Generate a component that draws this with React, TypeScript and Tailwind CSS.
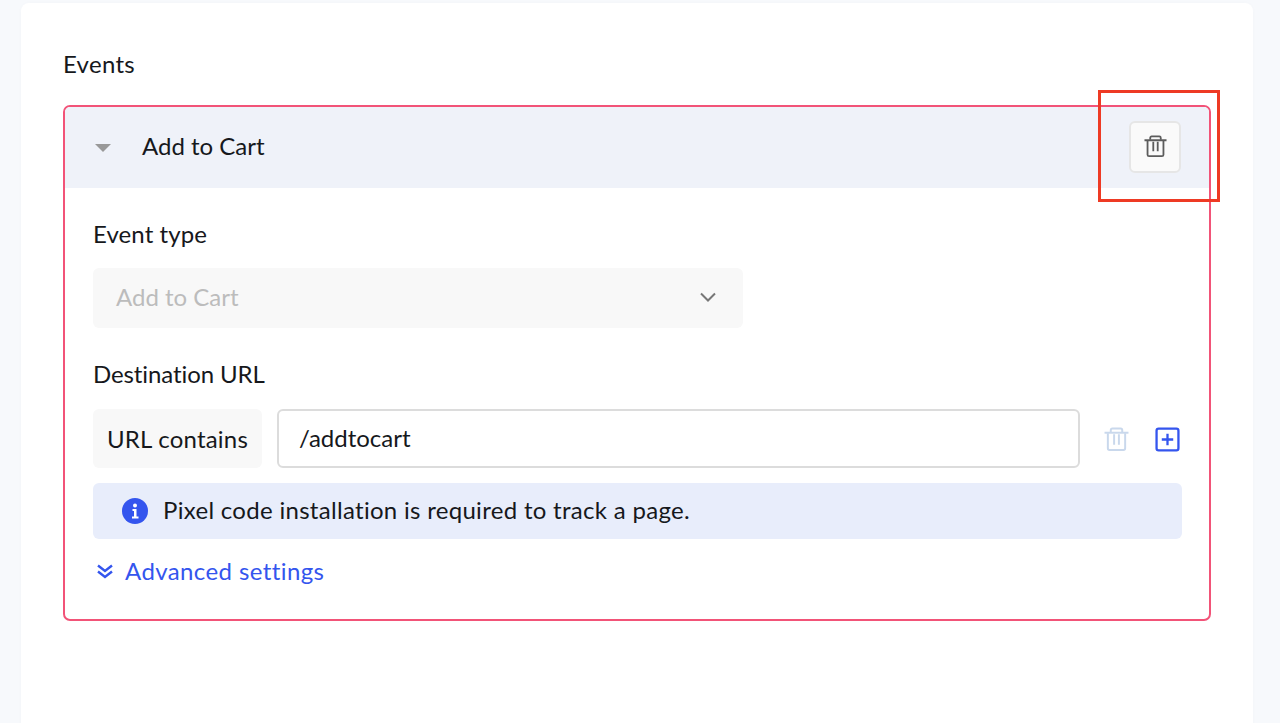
import React from 'react';

const TrashIcon = ({ className }: { className: string }) => (
  <svg viewBox="0 0 24 24" fill="none" stroke="currentColor" strokeWidth="1.9" className={className}>
    <path d="M.5 5.500h23" />
    <path d="M6.500 5V3c0-1 .6-1.500 1.500-1.500h8c.9 0 1.500.5 1.500 1.500v2" />
    <path d="M3.700 6v14.500c0 1 .6 1.600 1.600 1.600h13.400c1 0 1.600-.6 1.600-1.600V6" />
    <path d="M9.700 7v10M14.300 7v10" />
  </svg>
);

const App: React.FC = () => {
  return (
    <div className="h-[723px] overflow-hidden bg-[#f7f9fc] pt-[3px] pl-[21px] pr-[27px] font-['Lato',sans-serif] text-[#16181c]">
      <div className="relative h-[760px] rounded-lg bg-white px-[43px] pt-[46px] shadow-[0_0_4px_rgba(0,0,0,0.02)]">
        <div className="-ml-px text-[24px] leading-[30px] tracking-[0.3px]">Events</div>

        <div className="-ml-px mt-[26px] h-[516px] w-[1148px] overflow-hidden rounded-[7px] border-2 border-[#f25378]">
          <div className="flex h-[81px] items-center bg-[#eff2f9] pb-[2px] pl-[30px] pr-[28px]">
            <span className="mt-[2px] h-0 w-0 border-x-[8px] border-t-[8px] border-x-transparent border-t-[#999999]" />
            <span className="ml-[31px] pb-[2px] text-[24px]">Add to Cart</span>
            <button className="ml-auto flex h-[52px] w-[52px] items-center justify-center rounded-[6px] border-2 border-[#e6e6e6] bg-[#fafafa] text-[#5c5c5c]">
              <TrashIcon className="h-[23px] w-[23px]" />
            </button>
          </div>

          <div className="px-[28px] pt-[30px]">
            <div className="text-[24px] leading-[32px] tracking-[0.1px]">Event type</div>
            <div className="mt-[18px] flex h-[60px] w-[650px] items-center justify-between rounded-[6px] bg-[#f8f8f8] pl-[23px] pr-[27px] text-[24px] text-[#bcbcbc]">
              <span className="pb-[2px]">Add to Cart</span>
              <svg viewBox="0 0 16 10" fill="none" stroke="#777777" strokeWidth="2" className="mb-[3px] h-[10px] w-[16px]">
                <path d="M1 1.500l7 7 7-7" />
              </svg>
            </div>

            <div className="mt-[30px] text-[24px] leading-[32px] tracking-[-0.1px]">Destination URL</div>
            <div className="mt-[18px] flex h-[60px] items-center">
              <div className="mt-px flex h-[59px] w-[169px] items-center justify-center rounded-[6px] bg-[#f8f8f8] text-[24px] tracking-[0.2px]">URL contains</div>
              <div className="ml-[15px] mt-px flex h-[59px] w-[803px] items-center rounded-[6px] border-2 border-[#dcdcdc] pb-px pl-[20px] text-[24px]">/addtocart</div>
              <TrashIcon className="ml-[24px] mt-[2px] h-[25px] w-[25px] text-[#c9d8ec]" />
              <svg viewBox="0 0 24 24" fill="none" stroke="#3455ee" strokeWidth="2.200" className="ml-[26px] mt-[2px] h-[25px] w-[25px]">
                <rect x="1.500" y="1.500" width="21" height="21" rx="2" />
                <path d="M12 6.500v11M6.500 12h11" />
              </svg>
            </div>

            <div className="mt-[15px] flex h-[56px] w-[1089px] items-center rounded-[6px] bg-[#e8edfb] pl-[29px] text-[24px]">
              <svg viewBox="0 0 26 26" className="h-[26px] w-[26px]">
                <circle cx="13" cy="13" r="13" fill="#3455ee" />
                <circle cx="13" cy="7.500" r="2" fill="#ffffff" />
                <path d="M10.500 11h4v7.500h2v2h-6.500v-2h2v-5.500h-1.500z" fill="#ffffff" />
              </svg>
              <span className="ml-[15px] pb-[2px] tracking-[0.3px]">Pixel code installation is required to track a page.</span>
            </div>

            <div className="mt-[16px] flex items-center text-[24px] leading-[32px] text-[#3455ee]">
              <svg viewBox="0 0 16 16" fill="none" stroke="#3455ee" strokeWidth="2.400" className="ml-[4px] h-[16px] w-[16px]">
                <path d="M1 2.500l7 5.500 7-5.500M1 8.500l7 5.500 7-5.500" />
              </svg>
              <span className="ml-[12px] tracking-[0.4px]">Advanced settings</span>
            </div>
          </div>
        </div>

        <div className="absolute left-[1077px] top-[87px] h-[112px] w-[122px] border-[3px] border-[#ee3a24]" />
      </div>
    </div>
  );
};

export default App;
